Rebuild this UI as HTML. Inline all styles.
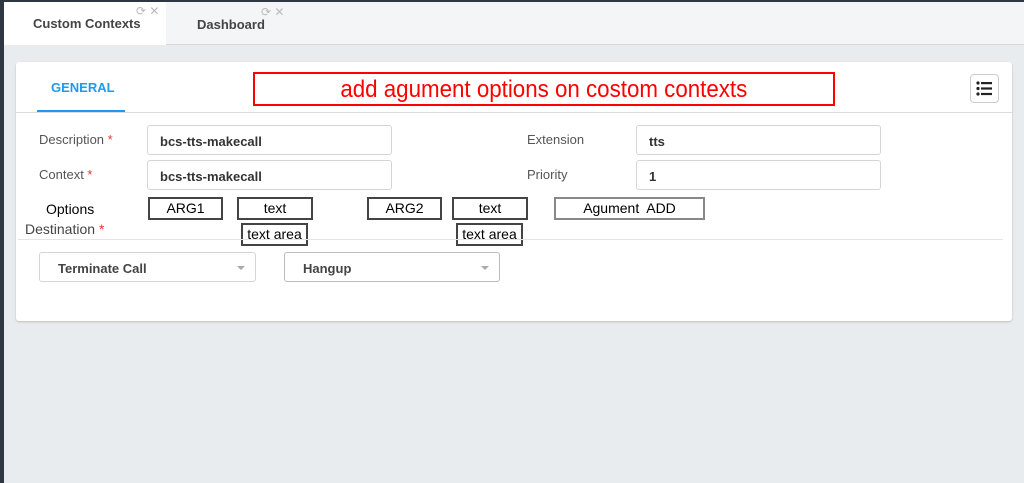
<!DOCTYPE html>
<html><head><meta charset="utf-8"><style>
*{box-sizing:border-box;margin:0;padding:0}
body{width:1024px;height:483px;background:#e9ecef;font-family:"Liberation Sans",sans-serif;position:relative;overflow:hidden}
.a{position:absolute}
.lbl{font-size:13px;color:#555}
.req{color:#e33}
.inp{position:absolute;height:30px;border:1px solid #d5d5d5;border-radius:3px;background:#fff;font-size:13px;font-weight:bold;color:#333;padding:8px 0 0 12px}
.bx{position:absolute;border:2px solid #444;font-size:14px;color:#000;text-align:center;line-height:18px;font-family:"Liberation Sans","Noto Sans CJK KR",sans-serif}
.sel{position:absolute;height:30px;border:1px solid #d5d5d5;border-radius:3px;background:#fff;font-size:13px;font-weight:bold;color:#444;padding:8px 0 0 18px}
.sel:after{content:"";position:absolute;right:10px;top:13px;border:4px solid transparent;border-top:4px solid #aaa}
.ic{color:#bbb;font-size:12px}
</style></head><body>
<div class="a" style="left:0;top:0;width:4px;height:483px;background:#2e3742"></div>
<div class="a" style="left:0;top:0;width:1024px;height:2px;background:#2e3742"></div>
<div class="a" style="left:4px;top:2px;width:1020px;height:43px;background:#f4f5f6;border-bottom:1px solid #d8d8d8"></div>
<div class="a" style="left:4px;top:2px;width:162px;height:43px;background:#fff"></div>
<div class="a" style="left:33px;top:16px;font-size:13px;font-weight:bold;color:#444">Custom Contexts</div>
<div class="a ic" style="left:136px;top:4px">⟳ ✕</div>
<div class="a" style="left:197px;top:17px;font-size:13px;font-weight:bold;color:#444">Dashboard</div>
<div class="a ic" style="left:261px;top:5px">⟳ ✕</div>

<div class="a" style="left:16px;top:62px;width:996px;height:259px;background:#fff;border-radius:3px;box-shadow:0 1px 2px rgba(0,0,0,.2)"></div>
<div class="a" style="left:16px;top:112px;width:996px;height:1px;background:#ddd"></div>
<div class="a" style="left:37px;top:110px;width:88px;height:2px;background:#2196f3"></div>
<div class="a" style="left:51px;top:80px;font-size:13px;font-weight:bold;color:#1e9be9">GENERAL</div>
<div class="a" style="left:253px;top:72px;width:582px;height:34px;border:2px solid #f00;color:#f00;font-size:24px;text-align:center;line-height:32px;font-family:'Liberation Sans','Noto Sans CJK KR',sans-serif;white-space:nowrap"><span style="display:inline-block;transform:scaleX(0.93)">add agument options on costom contexts</span></div>
<div class="a" style="left:970px;top:74px;width:29px;height:29px;border:1px solid #ccc;border-radius:4px">
<svg width="27" height="27" viewBox="0 0 27 27"><g fill="#222"><circle cx="7" cy="8" r="1.6"/><circle cx="7" cy="13.5" r="1.6"/><circle cx="7" cy="19" r="1.6"/><rect x="10" y="7" width="11" height="2.2"/><rect x="10" y="12.4" width="11" height="2.2"/><rect x="10" y="17.9" width="11" height="2.2"/></g></svg></div>

<div class="a lbl" style="left:39px;top:132px">Description <span class="req">*</span></div>
<div class="inp" style="left:147px;top:125px;width:245px">bcs-tts-makecall</div>
<div class="a lbl" style="left:39px;top:167px">Context <span class="req">*</span></div>
<div class="inp" style="left:147px;top:160px;width:245px">bcs-tts-makecall</div>
<div class="a lbl" style="left:527px;top:132px">Extension</div>
<div class="inp" style="left:636px;top:125px;width:245px">tts</div>
<div class="a lbl" style="left:527px;top:167px">Priority</div>
<div class="inp" style="left:636px;top:160px;width:245px">1</div>

<div class="a" style="left:46px;top:201px;font-size:14px;color:#000">Options</div>
<div class="a" style="left:25px;top:221px;font-size:14px;color:#444">Destination <span class="req">*</span></div>
<div class="bx" style="left:148px;top:197px;width:75px;height:23px">ARG1</div>
<div class="bx" style="left:237px;top:197px;width:76px;height:23px">text</div>
<div class="bx" style="left:241px;top:223px;width:67px;height:23px">text area</div>
<div class="bx" style="left:367px;top:197px;width:75px;height:23px">ARG2</div>
<div class="bx" style="left:452px;top:197px;width:76px;height:23px">text</div>
<div class="bx" style="left:456px;top:223px;width:67px;height:23px">text area</div>
<div class="bx" style="left:554px;top:197px;width:151px;height:23px;border-color:#888">Agument&nbsp; ADD</div>
<div class="a" style="left:18px;top:239px;width:985px;height:1px;background:#e5e5e5"></div>
<div class="sel" style="left:39px;top:252px;width:217px">Terminate Call</div>
<div class="sel" style="left:284px;top:252px;width:216px;border-color:#bbb">Hangup</div>
</body></html>
